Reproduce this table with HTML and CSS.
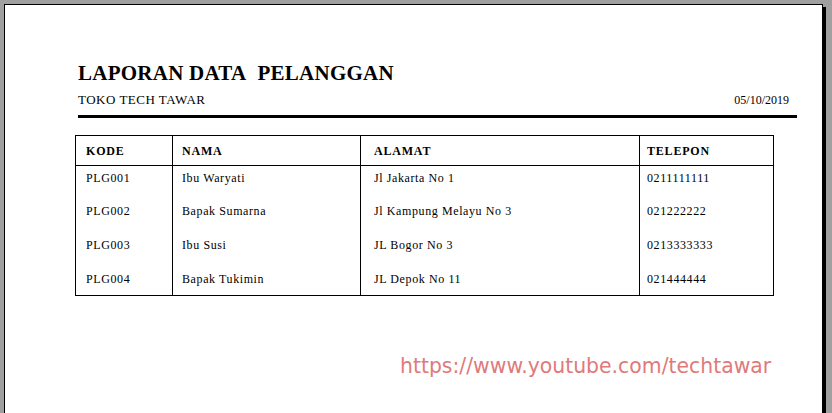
FILE: index.html
```html
<!DOCTYPE html>
<html>
<head>
<meta charset="utf-8">
<title>Laporan Data Pelanggan</title>
<link rel="stylesheet" href="styles.css">
</head>
<body>
<div class="page">
  <div class="report">
    <h1 class="title">LAPORAN DATA&nbsp; PELANGGAN</h1>
    <div class="subhead">
      <span class="store">TOKO TECH TAWAR</span>
      <span class="date">05/10/2019</span>
    </div>
    <div class="rule"></div>
    <table class="data">
      <thead>
        <tr>
          <th class="c1">KODE</th>
          <th class="c2">NAMA</th>
          <th class="c3">ALAMAT</th>
          <th class="c4">TELEPON</th>
        </tr>
      </thead>
      <tbody>
        <tr><td class="c1">PLG001</td><td class="c2">Ibu Waryati</td><td class="c3">Jl Jakarta No 1</td><td class="c4">0211111111</td></tr>
        <tr><td class="c1">PLG002</td><td class="c2">Bapak Sumarna</td><td class="c3">Jl Kampung Melayu No 3</td><td class="c4">021222222</td></tr>
        <tr><td class="c1">PLG003</td><td class="c2">Ibu Susi</td><td class="c3">JL Bogor No 3</td><td class="c4">0213333333</td></tr>
        <tr class="last"><td class="c1">PLG004</td><td class="c2">Bapak Tukimin</td><td class="c3">JL Depok No 11</td><td class="c4">021444444</td></tr>
      </tbody>
    </table>
    <div class="watermark">https://www.youtube.com/techtawar</div>
  </div>
</div>
</body>
</html>
```

FILE: styles.css
```css
html, body {
  margin: 0;
  padding: 0;
  background: #a0a0a0;
  overflow: hidden;
}
body {
  width: 832px;
  height: 413px;
  font-family: "Liberation Serif", "Times New Roman", serif;
  color: #000;
}
.page {
  box-sizing: border-box;
  margin: 4px 0 0 4px;
  width: 819px;
  height: 409px;
  background: #fff;
  border: 1px solid #000;
  border-bottom: none;
  box-shadow: 3px 3px 0 #000;
}
.report {
  padding: 0 0 0 70px;
}
.title {
  margin: 0;
  padding: 56px 0 0 3px;
  font-size: 21px;
  font-weight: bold;
  line-height: 24px;
  letter-spacing: 0.25px;
}
.subhead {
  display: flex;
  justify-content: space-between;
  align-items: baseline;
  width: 711px;
  padding: 7px 0 0 3px;
  line-height: 16px;
}
.store {
  font-size: 13px;
  letter-spacing: 0.5px;
}
.date {
  font-size: 12px;
}
.rule {
  margin: 7px 0 0 3px;
  width: 719px;
  height: 3px;
  background: #000;
}
.data {
  margin: 17px 0 0 0;
  border-collapse: collapse;
  width: 699px;
  font-size: 12px;
}
.data th, .data td {
  border-left: 1px solid #000;
  border-right: 1px solid #000;
  text-align: left;
  vertical-align: top;
  line-height: 15px;
}
.data th {
  font-weight: bold;
  letter-spacing: 0.8px;
  height: 30px;
  box-sizing: border-box;
  padding: 8px 0 0 0;
  border-top: 1px solid #000;
  border-bottom: 1px solid #000;
}
.data td {
  padding: 5px 0 0 0;
  height: 33.7px;
  box-sizing: border-box;
  letter-spacing: 0.6px;
}
.data tr.last td {
  height: 29px;
  border-bottom: 1px solid #000;
}
.c1 { width: 97px; padding-left: 10px !important; }
.c2 { width: 188px; padding-left: 9px !important; }
.c3 { width: 279px; padding-left: 13px !important; }
.c4 { padding-left: 7px !important; }
.watermark {
  margin: 58px 0 0 325px;
  font-family: "DejaVu Sans", Verdana, sans-serif;
  font-size: 20.4px;
  color: #e07a7a;
  line-height: 24px;
}
```
